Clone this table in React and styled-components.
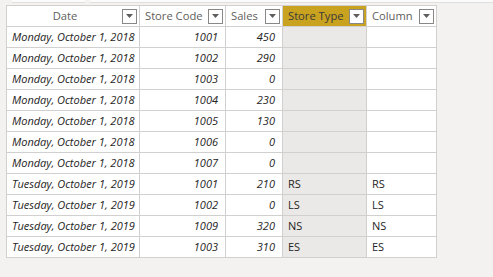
import React from "react";
import styled, { createGlobalStyle } from "styled-components";

const columns = [
  { key: "date", title: "Date", width: 133, center: true },
  { key: "code", title: "Store Code", width: 86 },
  { key: "sales", title: "Sales", width: 57 },
  { key: "type", title: "Store Type", width: 84, selected: true },
  { key: "col", title: "Column", width: 70 },
];

const rows = [
  ["Monday, October 1, 2018", 1001, 450, "", ""],
  ["Monday, October 1, 2018", 1002, 290, "", ""],
  ["Monday, October 1, 2018", 1003, 0, "", ""],
  ["Monday, October 1, 2018", 1004, 230, "", ""],
  ["Monday, October 1, 2018", 1005, 130, "", ""],
  ["Monday, October 1, 2018", 1006, 0, "", ""],
  ["Monday, October 1, 2018", 1007, 0, "", ""],
  ["Tuesday, October 1, 2019", 1001, 210, "RS", "RS"],
  ["Tuesday, October 1, 2019", 1002, 0, "LS", "LS"],
  ["Tuesday, October 1, 2019", 1009, 320, "NS", "NS"],
  ["Tuesday, October 1, 2019", 1003, 310, "ES", "ES"],
];

const GlobalStyle = createGlobalStyle`
  html, body {
    margin: 0;
    padding: 0;
    background: #f3f2f1;
  }
  body {
    font-family: "Segoe UI", "Open Sans", "Noto Sans", sans-serif;
  }
`;

const Page = styled.div`
  width: 493px;
  height: 277px;
  overflow: hidden;
  background: #f3f2f1;
  display: flex;
  flex-direction: column;
`;

const TopStrip = styled.div`
  height: 5px;
  display: flex;
  gap: 5px;
  padding-left: 12px;
  box-sizing: border-box;
`;

const TopBar = styled.div`
  height: 2px;
  width: ${props => props.w};
  background: #fbfbfb;
  border-bottom: 1px solid #e1dfdd;
  flex-shrink: 0;
`;

const Body = styled.div`
  padding-left: 6px;
`;

const Table = styled.table`
  width: 431px;
  border-collapse: collapse;
  table-layout: fixed;
  font-size: 11px;
  line-height: 14px;
`;

const HeadCell = styled.th`
  height: 20px;
  padding: 0 2px 0 5px;
  border: 1px solid #d2d0ce;
  background: ${props => (props.selected ? "#c9a21f" : "#ffffff")};
  color: ${props => (props.selected ? "#3b3a39" : "#605e5c")};
  font-weight: normal;
`;

const HeadInner = styled.div`
  display: flex;
  align-items: center;
  gap: 4px;
`;

const HeadTitle = styled.span`
  flex: 1;
  text-align: ${props => (props.center ? "center" : "left")};
  white-space: nowrap;
  overflow: hidden;
  font-size: 11.2px;
`;

const Dropdown = styled.span`
  width: 15px;
  height: 15px;
  box-sizing: border-box;
  border: 1px solid #8a8886;
  background: #ffffff;
  display: flex;
  align-items: center;
  justify-content: center;
  flex-shrink: 0;
`;

const Cell = styled.td`
  height: 20px;
  padding: 0 ${props => (props.right ? "7px" : "5px")};
  border: 1px solid #d2d0ce;
  background: ${props => (props.shade ? "#ebe9e7" : "#ffffff")};
  color: #252423;
  font-style: ${props => (props.italic ? "italic" : "normal")};
  text-align: ${props => (props.right ? "right" : "left")};
  white-space: nowrap;
  overflow: hidden;
`;

function Arrow() {
  return (
    <svg width="7" height="4" viewBox="0 0 7 4">
      <path d="M0 0 L7 0 L3.5 4 Z" fill="#605e5c" />
    </svg>
  );
}

export default function App() {
  return (
    <Page>
      <GlobalStyle />
      <TopStrip>
        <TopBar w="73px" />
        <TopBar w="420px" />
      </TopStrip>
      <Body>
        <Table>
          <colgroup>
            {columns.map(c => (
              <col key={c.key} style={{ width: c.width }} />
            ))}
          </colgroup>
          <thead>
            <tr>
              {columns.map(c => (
                <HeadCell key={c.key} selected={c.selected}>
                  <HeadInner>
                    <HeadTitle center={c.center}>{c.title}</HeadTitle>
                    <Dropdown>
                      <Arrow />
                    </Dropdown>
                  </HeadInner>
                </HeadCell>
              ))}
            </tr>
          </thead>
          <tbody>
            {rows.map((r, i) => (
              <tr key={i}>
                <Cell italic>{r[0]}</Cell>
                <Cell italic right>
                  {r[1]}
                </Cell>
                <Cell italic right>
                  {r[2]}
                </Cell>
                <Cell shade>{r[3]}</Cell>
                <Cell>{r[4]}</Cell>
              </tr>
            ))}
          </tbody>
        </Table>
      </Body>
    </Page>
  );
}
